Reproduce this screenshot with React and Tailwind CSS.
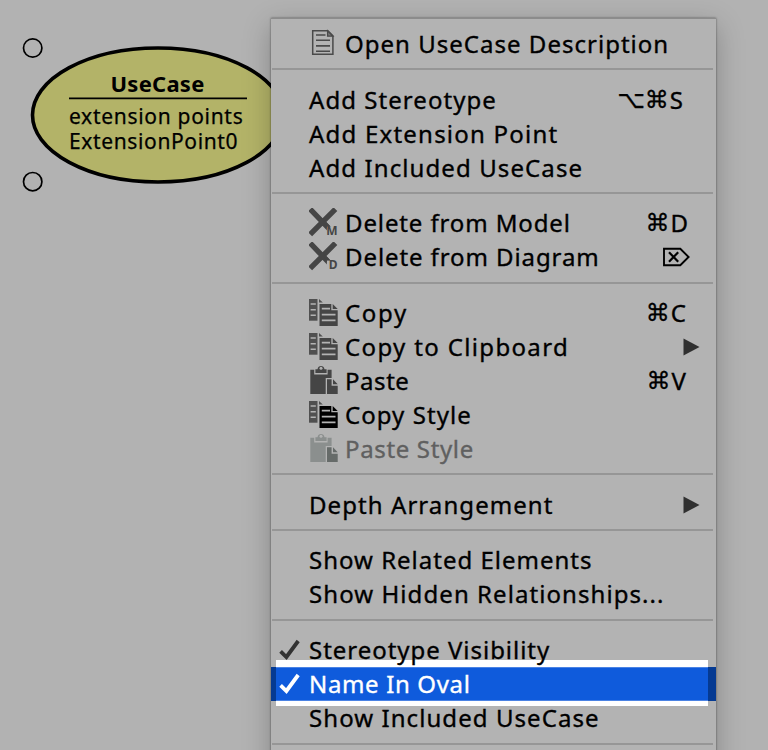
import React from "react";
import clsx from "clsx";

const DocumentIcon = () => (
  <svg className="h-[30px] w-[30px]" viewBox="0 0 30 30" fill="none" stroke="#4a4a4a">
    <path d="M3.7 1.8h15.1l5.1 5.1v18.4H3.7z" strokeWidth="1.5" />
    <path d="M18.6 1.8v5.4h5.3z" fill="#777" strokeWidth="1.3" />
    <path d="M7 6h9.5M7 11.3h14M7 16.9h14M7 22.2h14" strokeWidth="1.6" />
  </svg>
);

const DeleteIcon = ({ letter }) => (
  <svg className="h-[30px] w-[30px]" viewBox="0 0 30 30">
    <path d="M1.2 1.2L25.5 26.4M26.4 1.2L1.2 26.4" stroke="#454545" strokeWidth="5.4" />
    <path d="M17.8 18.2H30V30H17.8z" fill="#b3b3b3" />
    <path d="M14 10.5l7.5 8h-3.7v3.2z" fill="#454545" />
    <text
      x="28.5"
      y="27.4"
      textAnchor="end"
      fill="#454545"
      fontSize="12"
      fontWeight="700"
      fontFamily="Noto Sans, sans-serif"
    >
      {letter}
    </text>
  </svg>
);

const CopyIcon = ({ front = "#454545" }) => (
  <svg className="h-[30px] w-[30px]" viewBox="0 0 30 30">
    <path d="M-0.2 1h8.7v21.7h-8.7z" fill="#505050" />
    <path d="M10 1l3.8 3.6H10z" fill="#505050" />
    <path d="M1.6 6h5.2M1.6 11.7h5.2M1.6 17.2h5.2" stroke="#b3b3b3" strokeWidth="1.6" />
    <path d="M10.5 6h11.8v6.3h6.4V28H10.5z" fill={front} />
    <path d="M23.7 6l5 5h-5z" fill={front} />
    <path d="M12.8 10.6h8.2M12.8 16.6h13.7M12.8 22.4h13.7" stroke="#b3b3b3" strokeWidth="1.9" />
  </svg>
);

const PasteIcon = ({ board = "#454545", sheet = "#454545" }) => (
  <svg className="h-[30px] w-[30px] overflow-visible" viewBox="0 0 30 30">
    <path d="M1.3 3.7h3.9v4.8h13.4V3.7h4v8.2h-5.9V28H1.3z" fill={board} />
    <path d="M6.4 7V3.2h2.1a3.6 4.2 0 0 1 7 0h2.1V7z" fill={board} />
    <circle cx="12" cy="2.3" r="1.5" fill="#b3b3b3" />
    <path d="M18 13.3h4.6v6.4h6.1V28H18z" fill={sheet} />
    <path d="M24 13.3l4.7 5H24z" fill={sheet} />
  </svg>
);

const CheckIcon = () => (
  <svg className="h-[22px] w-[22px]" viewBox="0 0 22 22" fill="none" stroke="currentColor">
    <path d="M1.6 12.3L7.4 18L19.2 2" strokeWidth="3.8" />
  </svg>
);

const ForwardDeleteIcon = () => (
  <svg className="h-[20px] w-[28px]" viewBox="0 0 28 20" fill="none" stroke="#000">
    <path d="M2 1.8h16.3L26.6 10l-8.3 8.2H2z" strokeWidth="1.9" />
    <path d="M7 5.2l9.2 9.6M16.2 5.2L7 14.8" strokeWidth="2.2" />
  </svg>
);

const groups = [
  [
    {
      label: "Open UseCase Description",
      icon: <DocumentIcon />,
      tracking: "tracking-[1.02px]",
    },
  ],
  [
    { label: "Add Stereotype", keys: "⌥⌘", letter: "S", end: "pr-[33px]", tracking: "tracking-[1.05px]" },
    { label: "Add Extension Point", tracking: "tracking-[1.22px]" },
    { label: "Add Included UseCase", tracking: "tracking-[1.1px]" },
  ],
  [
    {
      label: "Delete from Model",
      icon: <DeleteIcon letter="M" />,
      keys: "⌘",
      letter: "D",
      end: "pr-[28px]",
      tracking: "tracking-[0.88px]",
    },
    {
      label: "Delete from Diagram",
      icon: <DeleteIcon letter="D" />,
      keys: <ForwardDeleteIcon />,
      end: "pr-[26px]",
      tracking: "tracking-[0.91px]",
    },
  ],
  [
    { label: "Copy", icon: <CopyIcon />, keys: "⌘", letter: "C", end: "pr-[30px]", tracking: "tracking-[1.7px]" },
    { label: "Copy to Clipboard", icon: <CopyIcon />, submenu: true, tracking: "tracking-[1.35px]" },
    { label: "Paste", icon: <PasteIcon />, keys: "⌘", letter: "V", end: "pr-[30px]", tracking: "tracking-[0.55px]" },
    { label: "Copy Style", icon: <CopyIcon front="#000" />, tracking: "tracking-[1.05px]" },
    {
      label: "Paste Style",
      icon: <PasteIcon board="#8b8f8e" sheet="#666b69" />,
      disabled: true,
      tracking: "tracking-[0.65px]",
    },
  ],
  [{ label: "Depth Arrangement", submenu: true, tracking: "tracking-[1.07px]" }],
  [
    { label: "Show Related Elements", tracking: "tracking-[1px]" },
    { label: "Show Hidden Relationships...", tracking: "tracking-[1.07px]" },
  ],
  [
    { label: "Stereotype Visibility", checked: true, tracking: "tracking-[0.97px]" },
    { label: "Name In Oval", checked: true, active: true, tracking: "tracking-[0.65px]" },
    { label: "Show Included UseCase", tracking: "tracking-[1.07px]" },
  ],
];

const MenuItem = ({ item }) => (
  <div
    className={clsx(
      "relative flex h-[34px] items-center",
      item.disabled ? "text-[#606060]" : item.active ? "text-white" : "text-black"
    )}
  >
    {item.active && (
      <div className="absolute inset-0 bg-[#053a92]">
        {/* Spotlight frame around the selected row */}
        <div className="absolute -top-[7px] -bottom-[5px] left-[5px] right-[8px] bg-white"></div>
        <div className="absolute inset-y-0 left-[5px] right-[8px] border-y border-[#4b83e4] bg-[#0f5bdc]"></div>
      </div>
    )}
    <div
      className={clsx(
        "relative flex w-[38px] shrink-0 pl-[8px]",
        !item.active && "text-[#333]"
      )}
    >
      {item.checked && <CheckIcon />}
    </div>
    {item.icon && <div className="w-[36px] shrink-0">{item.icon}</div>}
    <span
      className={clsx(
        "relative z-10 whitespace-nowrap [-webkit-text-stroke:0.35px_currentColor]",
        item.tracking
      )}
    >
      {item.label}
    </span>
    {item.keys && (
      <span
        className={clsx(
          "ml-auto flex items-center [-webkit-text-stroke:0.35px_currentColor]",
          item.end
        )}
      >
        <span className="font-['DejaVu_Sans'] [-webkit-text-stroke:0.3px_currentColor]">
          {item.keys}
        </span>
        {item.letter && <span className="ml-[1px]">{item.letter}</span>}
      </span>
    )}
    {item.submenu && (
      <svg className="ml-auto mr-[16px] h-[18px] w-[17px]" viewBox="0 0 17 18">
        <path d="M0.5 0.5L16.5 9L0.5 17.5z" fill="#303030" />
      </svg>
    )}
  </div>
);

const ContextMenu = () => (
  <div className="absolute left-[271px] top-[18px] h-[760px] w-[445px] border-t border-[#8c8c8c] bg-[#b3b3b3] pt-[8px] text-[24px] leading-[34px] shadow-[0_8px_26px_rgba(0,0,0,0.25),0_0_2px_rgba(0,0,0,0.5)]">
    {groups.map((group, index) => (
      <div key={index}>
        {group.map((item) => (
          <MenuItem key={item.label} item={item} />
        ))}
        <div className="h-[21.7px] pl-px pr-[3px] pt-[7.4px]">
          <div className="h-[2px] bg-[#969696]"></div>
        </div>
      </div>
    ))}
  </div>
);

const UseCaseShape = () => (
  <div className="absolute left-0 top-0 h-[200px] w-[300px] text-[21px] leading-[25px] text-black">
    <svg className="absolute inset-0" width="300" height="200" fill="none" stroke="#000">
      <ellipse cx="158" cy="115" rx="125.5" ry="67" fill="#b3b368" strokeWidth="3.6" />
      <path d="M69 98.3h178" strokeWidth="1.8" />
      <circle cx="32.7" cy="48" r="9.2" strokeWidth="1.7" />
      <circle cx="32.7" cy="181.7" r="9.2" strokeWidth="1.7" />
    </svg>
    <div className="relative ml-[69px] w-[177px] whitespace-nowrap pt-[71px]">
      <p className="text-center text-[22px] font-bold tracking-[0.25px]">UseCase</p>
      <p className="mt-[8px] tracking-[0.7px] [-webkit-text-stroke:0.25px_currentColor]">
        extension points
      </p>
      <p className="tracking-[0.63px] [-webkit-text-stroke:0.25px_currentColor]">
        ExtensionPoint0
      </p>
    </div>
  </div>
);

export default function App() {
  return (
    <div className="relative h-[750px] w-[768px] overflow-hidden bg-[#b2b2b2] font-['Noto_Sans','DejaVu_Sans',sans-serif]">
      <UseCaseShape />
      <ContextMenu />
    </div>
  );
}
